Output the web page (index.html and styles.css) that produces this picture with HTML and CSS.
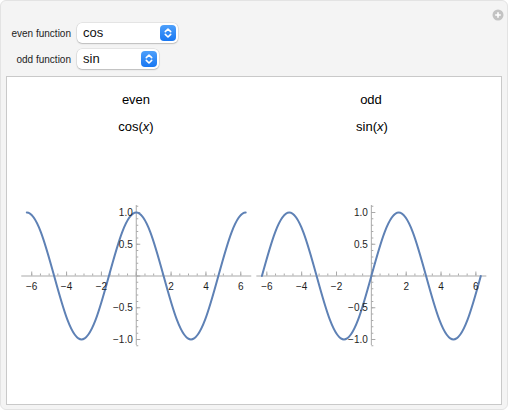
FILE: index.html
```html
<!DOCTYPE html>
<html>
<head>
<meta charset="utf-8">
<link rel="stylesheet" href="styles.css">
</head>
<body>
<div class="panel">
  <div class="plus">
    <svg width="12" height="12" viewBox="0 0 12 12"><circle cx="6" cy="6" r="5.5" fill="#c3c3c3"/><path d="M6 3.2V8.8M3.2 6H8.8" stroke="#fff" stroke-width="1.6"/></svg>
  </div>
  <div class="controls">
    <span class="lbl">even function</span>
    <div class="popup popup-cos"><span class="val">cos</span><span class="step"><svg width="16" height="16" viewBox="0 0 16 16"><path d="M5.3 6.6L8 4L10.7 6.6M5.3 9.4L8 12L10.7 9.4" fill="none" stroke="#fff" stroke-width="1.6" stroke-linecap="round" stroke-linejoin="round"/></svg></span></div>
    <span class="lbl">odd function</span>
    <div class="popup popup-sin"><span class="val">sin</span><span class="step"><svg width="16" height="16" viewBox="0 0 16 16"><path d="M5.3 6.6L8 4L10.7 6.6M5.3 9.4L8 12L10.7 9.4" fill="none" stroke="#fff" stroke-width="1.6" stroke-linecap="round" stroke-linejoin="round"/></svg></span></div>
  </div>
  <div class="output">
    <svg class="plot" width="247" height="327" viewBox="7 77 247 327">
      <text class="title" x="136" y="103.8">even</text>
      <text class="title" x="136" y="131.2">cos(<tspan class="it">x</tspan>)</text>
      <g class="axis">
        <path d="M21.25 276H251.25M136.25 205V345"/>
        <path class="minor-x" d="M31.23 274.5H241.27"/>
        <path class="major-x" d="M31.23 273.5H241.27"/>
        <path class="minor-y" d="M137.25 205.65V346.35"/>
        <path class="major-y" d="M138.25 212V340"/>
      </g>
      <path class="curve" d="M26.8 212.5c9.903 0 18.439 30.97 27.363 63.5c8.924 32.53 17.46 63.5 27.363 63.5c9.903 0 18.439 -30.97 27.363 -63.5c8.924 -32.53 17.46 -63.5 27.363 -63.5c9.903 0 18.439 30.97 27.363 63.5c8.924 32.53 17.46 63.5 27.363 63.5c9.903 0 18.439 -30.97 27.363 -63.5c8.924 -32.53 17.46 -63.5 27.363 -63.5"/>
      <g class="ticklbl">
        <text x="31.73" y="289.5">−6</text>
        <text x="66.57" y="289.5">−4</text>
        <text x="101.41" y="289.5">−2</text>
        <text x="171.09" y="289.5">2</text>
        <text x="205.93" y="289.5">4</text>
        <text x="240.77" y="289.5">6</text>
      </g>
      <g class="ticklbl-y">
        <text x="132.75" y="216.1">1.0</text>
        <text x="132.75" y="247.85">0.5</text>
        <text x="132.75" y="311.35">−0.5</text>
        <text x="132.75" y="343.1">−1.0</text>
      </g>
    </svg>
    <svg class="plot" width="247" height="327" viewBox="254 77 247 327">
      <text class="title" x="371" y="103.8">odd</text>
      <text class="title" x="372" y="131.2">sin(<tspan class="it">x</tspan>)</text>
      <g class="axis">
        <path d="M256.35 276H486.35M371.35 205V345"/>
        <path class="minor-x" d="M266.33 274.5H476.37"/>
        <path class="major-x" d="M266.33 273.5H476.37"/>
        <path class="minor-y" d="M372.35 205.65V346.35"/>
        <path class="major-y" d="M373.35 212V340"/>
      </g>
      <path class="curve" d="M261.9 276c8.924 -32.53 17.46 -63.5 27.363 -63.5c9.903 0 18.439 30.97 27.363 63.5c8.924 32.53 17.46 63.5 27.363 63.5c9.903 0 18.439 -30.97 27.363 -63.5c8.924 -32.53 17.46 -63.5 27.363 -63.5c9.903 0 18.439 30.97 27.363 63.5c8.924 32.53 17.46 63.5 27.363 63.5c9.903 0 18.439 -30.97 27.363 -63.5"/>
      <g class="ticklbl">
        <text x="266.83" y="289.5">−6</text>
        <text x="301.67" y="289.5">−4</text>
        <text x="336.51" y="289.5">−2</text>
        <text x="406.19" y="289.5">2</text>
        <text x="441.03" y="289.5">4</text>
        <text x="475.87" y="289.5">6</text>
      </g>
      <g class="ticklbl-y">
        <text x="367.85" y="216.1">1.0</text>
        <text x="367.85" y="247.85">0.5</text>
        <text x="367.85" y="311.35">−0.5</text>
        <text x="367.85" y="343.1">−1.0</text>
      </g>
    </svg>
  </div>
</div>
</body>
</html>
```
FILE: styles.css
```css
html, body {
  margin: 0;
  padding: 0;
  background: #ffffff;
}
body {
  font-family: "Liberation Sans", Arial, sans-serif;
}
.panel {
  position: relative;
  box-sizing: border-box;
  width: 508px;
  height: 410px;
  background: #f4f4f4;
  border: 1px solid #e3e3e3;
  border-radius: 6px;
  padding: 22px 0 0 5px;
}
.plus {
  position: absolute;
  left: 491px;
  top: 8px;
  width: 12px;
  height: 12px;
}
.plus svg {
  display: block;
}
.controls {
  display: grid;
  grid-template-columns: 65px auto;
  column-gap: 6px;
  row-gap: 6px;
  align-items: center;
  justify-items: start;
}
.lbl {
  justify-self: end;
  font-size: 10px;
  color: #222;
  line-height: 12px;
  padding-top: 1px;
}
.popup {
  box-sizing: border-box;
  height: 20px;
  display: flex;
  align-items: center;
  justify-content: space-between;
  background: #fff;
  border-radius: 5px;
  box-shadow: 0 0 0 0.5px rgba(0,0,0,0.12), 0 1px 1.5px rgba(0,0,0,0.18);
  padding: 0 2px 0 6px;
}
.popup-cos { width: 101px; }
.popup-sin { width: 82px; }
.val {
  font-size: 13px;
  color: #111;
  line-height: 16px;
}
.step {
  width: 16px;
  height: 16px;
  border-radius: 4px;
  background: linear-gradient(#4ea0fb, #1877f2);
}
.step svg {
  display: block;
}
.output {
  box-sizing: border-box;
  margin-top: 7px;
  width: 496px;
  height: 329px;
  background: #fff;
  border: 1px solid #c9c9c9;
  display: flex;
}
.plot {
  display: block;
  flex: none;
}
.title {
  font-family: "Liberation Sans", Arial, sans-serif;
  font-size: 13px;
  fill: #000;
  text-anchor: middle;
}
.it {
  font-style: italic;
}
.axis path {
  fill: none;
  stroke: #a9a9a9;
  stroke-width: 1;
}
.axis .minor-x {
  stroke-width: 2;
  stroke-dasharray: 1 7.71;
}
.axis .major-x {
  stroke-width: 4;
  stroke-dasharray: 1 33.84;
}
.axis .minor-y {
  stroke-width: 2;
  stroke-dasharray: 1 5.35;
}
.axis .major-y {
  stroke-width: 4;
  stroke-dasharray: 1 30.75;
}
.curve {
  fill: none;
  stroke: #5e81b5;
  stroke-width: 2;
  stroke-linecap: round;
}
.ticklbl text {
  font-family: "Liberation Sans", Arial, sans-serif;
  font-size: 10px;
  fill: #1e1e1e;
  text-anchor: middle;
}
.ticklbl-y text {
  font-family: "Liberation Sans", Arial, sans-serif;
  font-size: 10px;
  fill: #1e1e1e;
  text-anchor: end;
}
```
